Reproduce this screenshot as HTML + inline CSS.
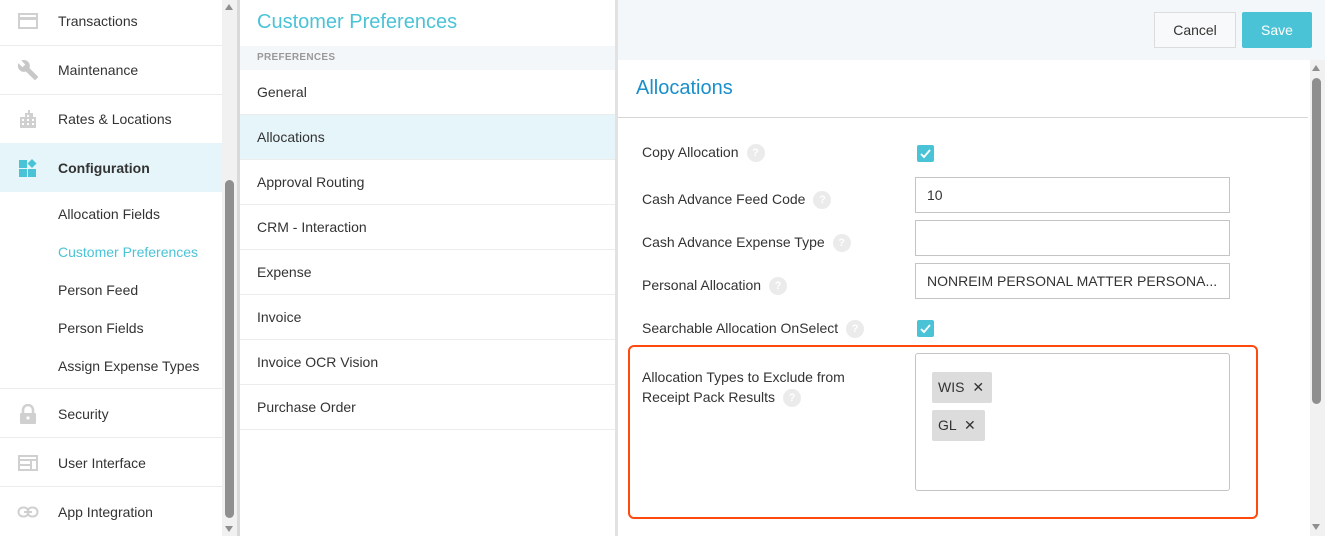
<!DOCTYPE html>
<html><head><meta charset="utf-8"><style>
*{box-sizing:border-box;margin:0;padding:0}
body{width:1325px;height:536px;overflow:hidden;background:#fff;font-family:"Liberation Sans",Arial,sans-serif;color:#333;font-size:14px;position:relative}
.a{position:absolute}
.sb{left:0;top:0;width:222px;height:536px;background:#fff}
.row{position:absolute;left:0;width:222px;height:49px;display:flex;align-items:center}
.row .ic{width:58px;display:flex;justify-content:center;padding-right:2px}
.row span{font-size:14px;color:#333}
.ln{position:absolute;height:1px;background:#ececec}
.sub{position:absolute;left:58px;font-size:14px;color:#333}
.mi{position:absolute;left:240px;width:375px;height:45px;display:flex;align-items:center;padding-left:17px;font-size:14px;border-bottom:1px solid #ececec}
.lab{position:absolute;left:642px;font-size:14px;color:#333}
.q{display:inline-block;width:18px;height:18px;border-radius:50%;background:#ebebeb;color:#fff;font-size:11px;font-weight:bold;text-align:center;line-height:18px;vertical-align:middle;margin-left:8px}
.inp{position:absolute;left:915px;width:315px;height:36px;border:1px solid #c4c4c4;font-size:14px;padding:0 11px;line-height:34px;color:#333}
.cb{position:absolute;left:917px;width:17px;height:17px;background:#4bc3d6;border-radius:2px}
.tag{position:absolute;left:932px;height:31px;background:#dcdcdc;border-radius:2px;font-size:14px;line-height:31px;padding-left:6px;color:#333}
</style></head><body>
<div class="a sb"></div>
<div class="row" style="top:-4px"><div class="ic"><svg width="20" height="16"><rect x="1" y="1" width="18" height="14" fill="none" stroke="#d0d0d0" stroke-width="2"/><rect x="1" y="4" width="18" height="3" fill="#d0d0d0"/></svg></div><span>Transactions</span></div>
<div class="ln" style="left:0;top:45px;width:222px"></div>
<div class="row" style="top:45px"><div class="ic"><svg width="22" height="22" viewBox="0 0 24 24"><path d="M22.7 19l-9.1-9.1c.9-2.3.4-5-1.5-6.9-2-2-5-2.4-7.4-1.3L9 6 6 9 1.6 4.7C.4 7.1.9 10.1 2.9 12.1c1.9 1.9 4.6 2.4 6.9 1.5l9.1 9.1c.4.4 1 .4 1.4 0l2.3-2.3c.5-.4.5-1.1.1-1.4z" fill="#c8c8c8"/></svg></div><span>Maintenance</span></div>
<div class="ln" style="left:0;top:94px;width:222px"></div>
<div class="row" style="top:94px"><div class="ic"><svg width="20" height="20"><path d="M2 19V8h5V4h3V1h2v3h3v4h3v11z" fill="#d0d0d0"/><g fill="#fff"><rect x="4" y="10" width="2" height="2"/><rect x="4" y="14" width="2" height="2"/><rect x="9" y="6" width="2" height="2"/><rect x="9" y="10" width="2" height="2"/><rect x="9" y="14" width="2" height="2"/><rect x="14" y="10" width="2" height="2"/><rect x="14" y="14" width="2" height="2"/></g></svg></div><span>Rates &amp; Locations</span></div>
<div class="a" style="left:0;top:143px;width:222px;height:49px;background:#e5f5fa"></div>
<div class="row" style="top:143px"><div class="ic"><svg width="20" height="20"><rect x="1" y="2" width="8" height="8" fill="#4bc3d6"/><rect x="1" y="11" width="8" height="8" fill="#4bc3d6"/><rect x="10" y="11" width="8" height="8" fill="#4bc3d6"/><path d="M14 1l4.5 4.5L14 10 9.5 5.5z" fill="#4bc3d6"/></svg></div><span style="font-weight:bold">Configuration</span></div>
<div class="sub" style="top:206px">Allocation Fields</div>
<div class="sub" style="top:244px;color:#4bc3d6">Customer Preferences</div>
<div class="sub" style="top:282px">Person Feed</div>
<div class="sub" style="top:320px">Person Fields</div>
<div class="sub" style="top:358px">Assign Expense Types</div>
<div class="ln" style="left:0;top:388px;width:222px"></div>
<div class="row" style="top:389px"><div class="ic"><svg width="18" height="20"><path d="M4 9V6a5 5 0 0 1 10 0v3" fill="none" stroke="#d0d0d0" stroke-width="2.5"/><rect x="1" y="9" width="16" height="11" rx="1" fill="#d0d0d0"/><circle cx="9" cy="14" r="1.6" fill="#fff"/></svg></div><span>Security</span></div>
<div class="ln" style="left:0;top:437px;width:222px"></div>
<div class="row" style="top:438px"><div class="ic"><svg width="20" height="16"><rect x="1" y="1" width="18" height="14" fill="none" stroke="#d0d0d0" stroke-width="2"/><rect x="1" y="4" width="18" height="2" fill="#d0d0d0"/><rect x="12" y="6" width="2" height="9" fill="#d0d0d0"/><rect x="1" y="9" width="12" height="2" fill="#d0d0d0"/></svg></div><span>User Interface</span></div>
<div class="ln" style="left:0;top:486px;width:222px"></div>
<div class="row" style="top:487px"><div class="ic"><svg width="22" height="12"><rect x="1.5" y="1.5" width="10" height="9" rx="4.5" fill="none" stroke="#d0d0d0" stroke-width="2"/><rect x="10.5" y="1.5" width="10" height="9" rx="4.5" fill="none" stroke="#d0d0d0" stroke-width="2"/><rect x="7" y="5" width="8" height="2" fill="#d0d0d0"/></svg></div><span>App Integration</span></div>
<!-- sidebar scrollbar -->
<div class="a" style="left:222px;top:0;width:15px;height:536px;background:#f1f1f1"></div>
<div class="a" style="left:225px;top:180px;width:9px;height:338px;background:#8f8f8f;border-radius:5px"></div>
<div class="a" style="left:225px;top:4px;width:0;height:0;border:4.5px solid transparent;border-bottom:6px solid #8f8f8f;border-top:0"></div>
<div class="a" style="left:225px;top:526px;width:0;height:0;border:4.5px solid transparent;border-top:6px solid #8f8f8f;border-bottom:0"></div>
<!-- middle panel -->
<div class="a" style="left:237px;top:0;width:381px;height:536px;background:#fff;border-left:3px solid #d9d9d9;border-right:3px solid #e2e2e2"></div>
<div class="a" style="left:257px;top:11px;font-size:20px;color:#4bc3d6">Customer Preferences</div>
<div class="a" style="left:240px;top:46px;width:375px;height:24px;background:#f4f7fa;font-size:10px;font-weight:bold;color:#999;padding-left:17px;line-height:24px;letter-spacing:.3px">PREFERENCES</div>
<div class="mi" style="top:70px">General</div>
<div class="mi" style="top:115px;background:#e5f5fa">Allocations</div>
<div class="mi" style="top:160px">Approval Routing</div>
<div class="mi" style="top:205px">CRM - Interaction</div>
<div class="mi" style="top:250px">Expense</div>
<div class="mi" style="top:295px">Invoice</div>
<div class="mi" style="top:340px">Invoice OCR Vision</div>
<div class="mi" style="top:385px">Purchase Order</div>
<!-- right -->
<div class="a" style="left:618px;top:0;width:707px;height:60px;background:#f4f7fa"></div>
<div class="a" style="left:1154px;top:12px;width:82px;height:36px;border:1px solid #dcdcdc;background:#f8f9fa;text-align:center;line-height:34px;font-size:14px">Cancel</div>
<div class="a" style="left:1242px;top:12px;width:70px;height:36px;background:#4bc3d6;color:#fff;text-align:center;line-height:36px;font-size:14px;border-radius:2px">Save</div>
<div class="a" style="left:636px;top:77px;font-size:20px;color:#1a8fc9">Allocations</div>
<div class="a" style="left:618px;top:117px;width:690px;height:1px;background:#d6d6d6"></div>
<div class="a" style="left:1310px;top:60px;width:15px;height:476px;background:#f1f1f1"></div>
<div class="a" style="left:1312px;top:78px;width:9px;height:326px;background:#8f8f8f;border-radius:5px"></div>
<div class="a" style="left:1312px;top:65px;width:0;height:0;border:4.5px solid transparent;border-bottom:6px solid #8f8f8f;border-top:0"></div>
<div class="a" style="left:1312px;top:524px;width:0;height:0;border:4.5px solid transparent;border-top:6px solid #8f8f8f;border-bottom:0"></div>

<div class="lab" style="top:144px">Copy Allocation<span class="q">?</span></div>
<div class="cb" style="top:145px"><svg width="17" height="17"><path d="M4 9l3 3 6-7" fill="none" stroke="#fff" stroke-width="1.8"/></svg></div>
<div class="lab" style="top:191px">Cash Advance Feed Code<span class="q">?</span></div>
<div class="inp" style="top:177px">10</div>
<div class="lab" style="top:234px">Cash Advance Expense Type<span class="q">?</span></div>
<div class="inp" style="top:220px"></div>
<div class="lab" style="top:277px">Personal Allocation<span class="q">?</span></div>
<div class="inp" style="top:263px">NONREIM PERSONAL MATTER PERSONA...</div>
<div class="lab" style="top:320px">Searchable Allocation OnSelect<span class="q">?</span></div>
<div class="cb" style="top:320px"><svg width="17" height="17"><path d="M4 9l3 3 6-7" fill="none" stroke="#fff" stroke-width="1.8"/></svg></div>

<div class="a" style="left:628px;top:345px;width:630px;height:174px;border:2.5px solid #ff4a0d;border-radius:6px"></div>
<div class="lab" style="top:367px;line-height:20px">Allocation Types to Exclude from<br>Receipt Pack Results<span class="q">?</span></div>
<div class="a" style="left:915px;top:353px;width:315px;height:138px;border:1px solid #c4c4c4;border-radius:3px"></div>
<div class="tag" style="top:372px;width:60px">WIS <span style="margin-left:4px">✕</span></div>
<div class="tag" style="top:410px;width:53px">GL <span style="margin-left:4px">✕</span></div>
</body></html>
